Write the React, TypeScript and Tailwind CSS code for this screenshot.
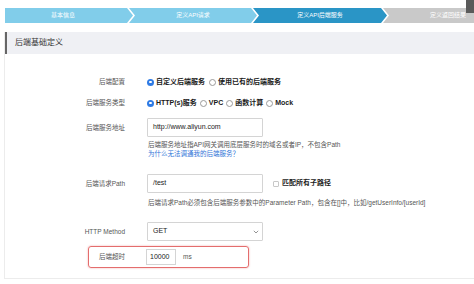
import React from 'react';

const font = "font-['Liberation_Sans','Noto_Sans_CJK_SC',sans-serif]";

const Radio = ({ checked }: { checked?: boolean }) =>
  checked ? (
    <span className="inline-flex w-[7px] h-[7px] rounded-full bg-[#2f7be5] items-center justify-center mr-[2px]">
      <span className="w-[2.5px] h-[2.5px] rounded-full bg-white" />
    </span>
  ) : (
    <span className="inline-block w-[7px] h-[7px] rounded-full border border-[#9a9a9a] bg-white mr-[2px]" />
  );

const Row = ({ label, children, className = '' }: { label: string; children: React.ReactNode; className?: string }) => (
  <div className={`flex items-center ${className}`}>
    <div className="w-[119px] text-right text-[6.5px] text-[#555]">{label}</div>
    <div className="ml-[22px] flex items-center">{children}</div>
  </div>
);

const Input = ({ value, w = 'w-[116px]' }: { value: string; w?: string }) => (
  <div className={`${w} h-[19px] border border-[#d4d4d4] rounded-[1px] bg-white flex items-center pl-[5px] text-[7px] text-[#222]`}>
    {value}
  </div>
);

export default function App() {
  return (
    <div className={`relative w-[474px] h-[284px] bg-white overflow-hidden ${font}`}>
      {/* steps */}
      <div className="flex pt-[8px] pl-[5px] h-[23px]">
        <div className="w-[128px] h-[15px] shrink-0 bg-[#81cdea] text-white text-[6px] flex items-center justify-center pr-[12px] [clip-path:polygon(0_0,calc(100%-6px)_0,100%_50%,calc(100%-6px)_100%,0_100%)]">
          基本信息
        </div>
        <div className="-ml-[4px] w-[128px] h-[15px] shrink-0 bg-[#81cdea] text-white text-[6px] flex items-center justify-center [clip-path:polygon(0_0,calc(100%-6px)_0,100%_50%,calc(100%-6px)_100%,0_100%,6px_50%)]">
          定义API请求
        </div>
        <div className="-ml-[4px] w-[134px] h-[15px] shrink-0 bg-[#2a95c6] text-white text-[6px] flex items-center justify-center [clip-path:polygon(0_0,calc(100%-6px)_0,100%_50%,calc(100%-6px)_100%,0_100%,6px_50%)]">
          定义API后端服务
        </div>
        <div className="-ml-[4px] w-[130px] h-[15px] shrink-0 bg-[#c9c9c9] text-white text-[6px] flex items-center justify-center [clip-path:polygon(0_0,100%_0,100%_100%,0_100%,6px_50%)]">
          定义返回结果
        </div>
      </div>
      <div className="absolute top-0 right-0 w-[8px] h-[13px] bg-[#5a5a5a]" />

      {/* panel */}
      <div className="ml-[4px] mt-[9px] h-[247px] border-l border-b border-[#ececec]">
        <div className="h-[22px] bg-[#eff0f4] border-l-2 border-[#666] flex items-center pl-[8px] text-[8px] text-[#333]">
          后端基础定义
        </div>

        <div className="pt-[21px] pl-px">
          <Row label="后端配置" className="h-[14px]">
            <div className="flex items-center text-[7px] font-semibold text-[#1a1a1a]">
              <Radio checked />
              <span>自定义后端服务</span>
              <span className="ml-[4px]" />
              <Radio />
              <span>使用已有的后端服务</span>
            </div>
          </Row>
          <Row label="后端服务类型" className="h-[14px] mt-[7px]">
            <div className="flex items-center text-[7px] font-semibold text-[#1a1a1a]">
              <Radio checked />
              <span>HTTP(s)服务</span>
              <span className="ml-[3px]" />
              <Radio />
              <span>VPC</span>
              <span className="ml-[3px]" />
              <Radio />
              <span>函数计算</span>
              <span className="ml-[3px]" />
              <Radio />
              <span>Mock</span>
            </div>
          </Row>
          <Row label="后端服务地址" className="mt-[8px]">
            <Input value="http://www.aliyun.com" />
          </Row>
          <div className="ml-[142px] mt-[3px] text-[6.5px] leading-[9px] text-[#555]">
            <div>后端服务地址指API网关调用底层服务时的域名或者IP，不包含Path</div>
            <div className="text-[#2f74d8]">为什么无法调通我的后端服务？</div>
          </div>
          <Row label="后端请求Path" className="mt-[16px]">
            <Input value="/test" />
            <span className="ml-[10px] w-[6px] h-[6px] border border-[#c8c8c8] rounded-[1px] bg-white" />
            <span className="ml-[3px] text-[7px] font-semibold text-[#1a1a1a]">匹配所有子路径</span>
          </Row>
          <div className="ml-[142px] mt-[5px] text-[6.5px] leading-[9px] text-[#555]">
            后端请求Path必须包含后端服务参数中的Parameter Path，包含在[]中，比如/getUserInfo/[userId]
          </div>
          <Row label="HTTP Method" className="mt-[15px]">
            <div className="w-[116px] h-[19px] border border-[#d4d4d4] rounded-[1px] bg-white flex items-center justify-between pl-[5px] pr-[3px] text-[7px] text-[#222]">
              <span>GET</span>
              <svg width="6" height="4" viewBox="0 0 6 4" fill="none">
                <path d="M0.8 0.8L3 3L5.2 0.8" stroke="#888" strokeWidth="0.9" />
              </svg>
            </div>
          </Row>
          <div className="ml-[82px] mt-[5px] w-[161px] h-[22px] border-[1.5px] border-[#e46d6d] rounded-[3px] shadow-[0_0_2px_rgba(228,109,109,0.6)] flex items-center">
            <div className="w-[36px] text-right text-[6.5px] text-[#555]">后端超时</div>
            <div className="ml-[21px] w-[30px] h-[16px] border border-[#d4d4d4] bg-white flex items-center pl-[3px] text-[7px] text-[#222]">
              10000
            </div>
            <span className="ml-[7px] text-[6.5px] text-[#555]">ms</span>
          </div>
        </div>
      </div>
    </div>
  );
}
